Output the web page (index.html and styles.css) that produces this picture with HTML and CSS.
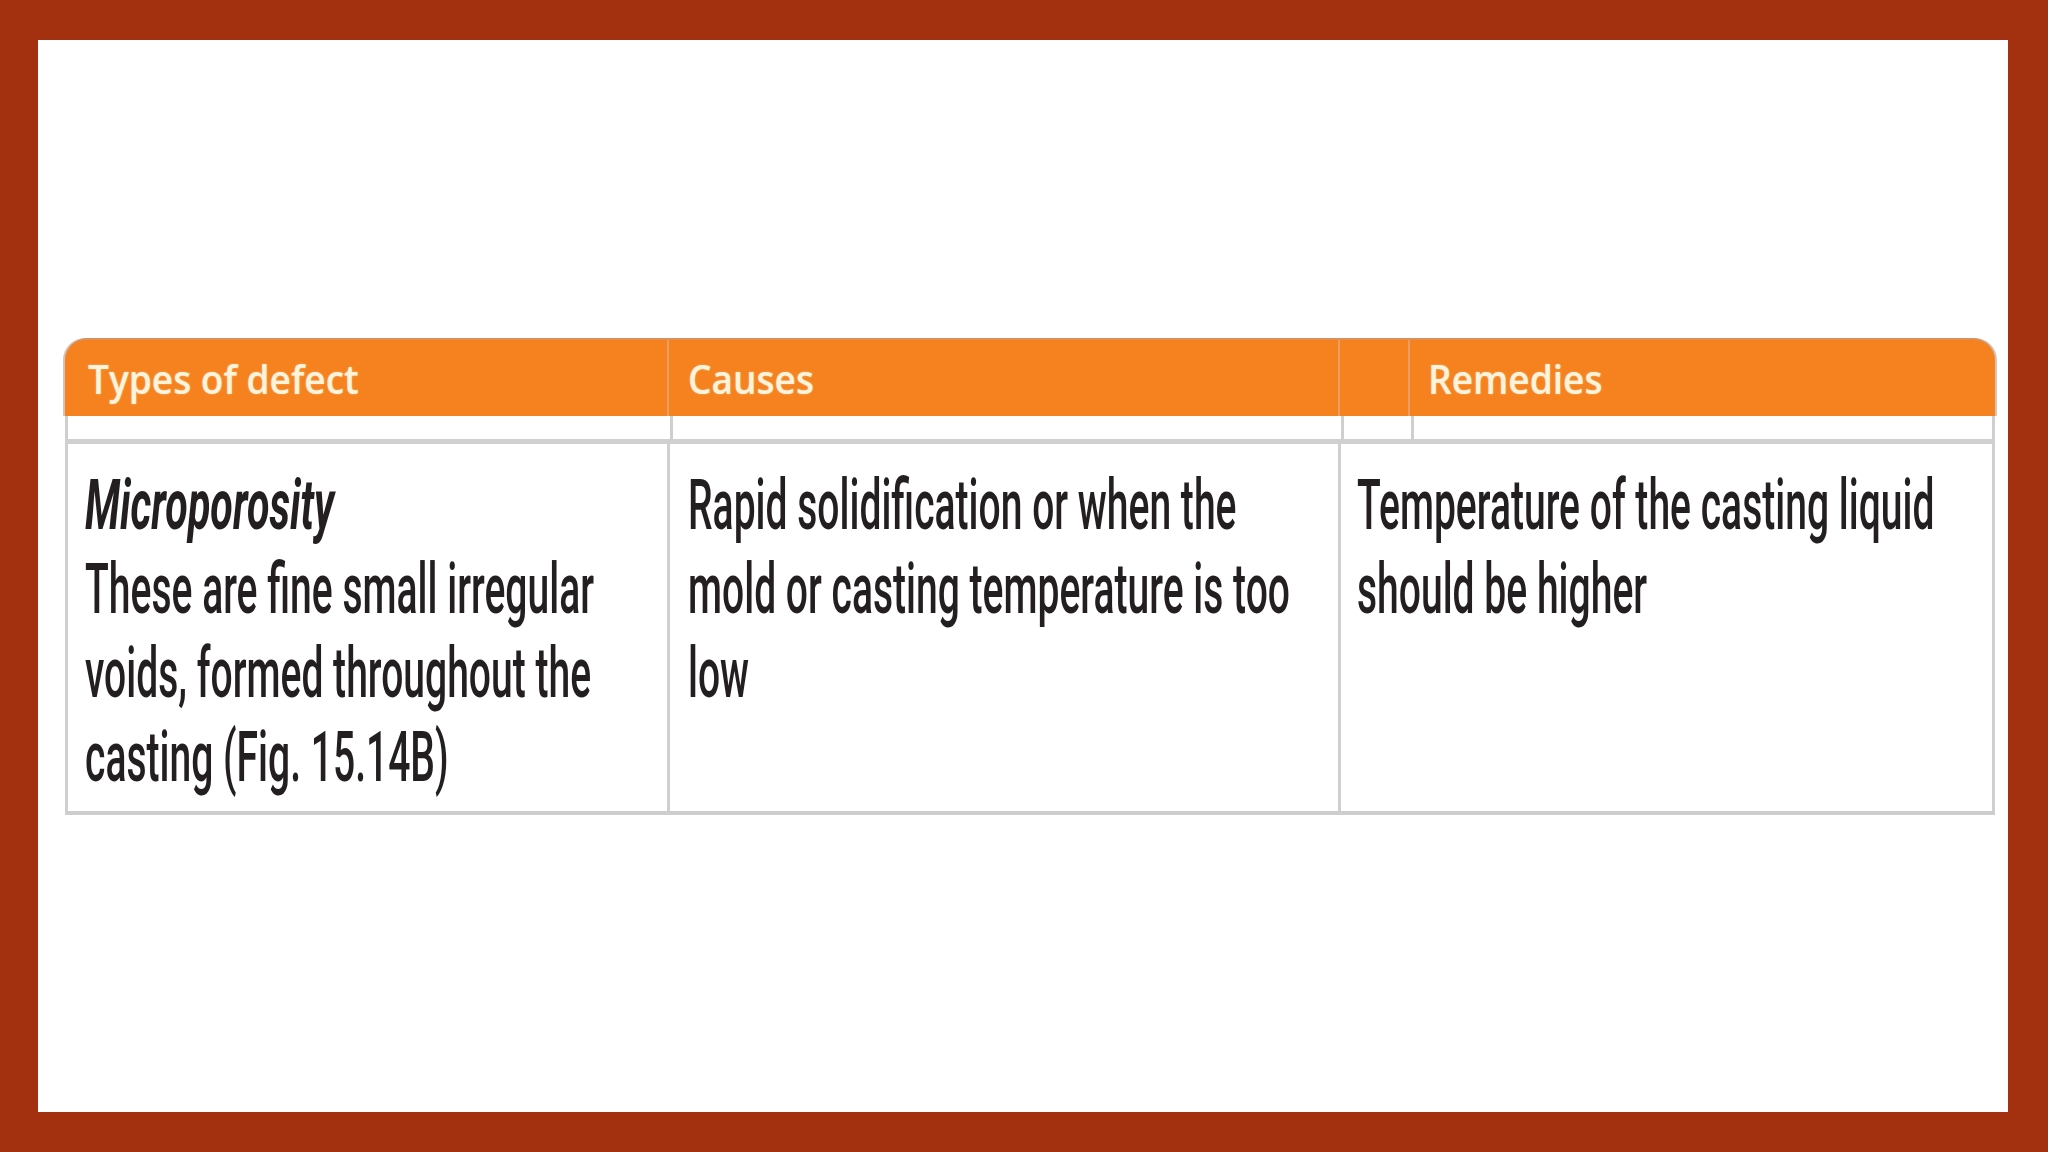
FILE: index.html
```html
<!DOCTYPE html>
<html lang="en">
<head>
<meta charset="utf-8">
<title>Casting defects</title>
<link rel="stylesheet" href="styles.css">
</head>
<body>
<div class="frame">
  <div class="sheet">
    <div class="table">
      <div class="head">
        <div class="hc"><span class="ht">Types of defect</span></div>
        <div class="hc div cau"><span class="ht">Causes</span></div>
        <div class="hc div"></div>
        <div class="hc div rem"><span class="ht">Remedies</span></div>
      </div>
      <div class="strip">
        <div class="sc"></div>
        <div class="sc sdiv"></div>
        <div class="sc sdiv"></div>
        <div class="sc sdiv"></div>
      </div>
      <div class="body">
        <div class="bc c1">
          <span class="ln bi">Microporosity</span>
          <span class="ln">These are fine small irregular</span>
          <span class="ln">voids, formed throughout the</span>
          <span class="ln">casting (Fig. 15.14B)</span>
        </div>
        <div class="bc c2 bdiv">
          <span class="ln">Rapid solidification or when the</span>
          <span class="ln">mold or casting temperature is too</span>
          <span class="ln">low</span>
        </div>
        <div class="bc c3 bdiv">
          <span class="ln">Temperature of the casting liquid</span>
          <span class="ln">should be higher</span>
        </div>
      </div>
    </div>
  </div>
</div>
</body>
</html>
```

FILE: styles.css
```css
html, body {
  margin: 0;
  padding: 0;
}

body {
  width: 2048px;
  height: 1152px;
  overflow: hidden;
  font-family: "Open Sans", "Liberation Sans", sans-serif;
}

.frame {
  box-sizing: border-box;
  width: 2048px;
  height: 1152px;
  background: #a3300f;
  padding: 40px 40px 40px 38px;
}

.sheet {
  box-sizing: border-box;
  height: 100%;
  background: #ffffff;
  padding: 298px 13px 0 27px;
}

.table {
  width: 1930px;
}

.head {
  box-sizing: border-box;
  height: 78px;
  display: grid;
  grid-template-columns: 602px 671px 70px 1fr;
  background: #f5821f;
  border-top: 2px solid #dc8f5c;
  border-radius: 22px 22px 0 0;
  box-shadow: -2px 0 0 #d8c4b4, 2px 0 0 #d8c4b4;
}

.hc {
  padding: 11px 0 0 23px;
  white-space: nowrap;
}

.hc.div {
  border-left: 2px solid #eb9d63;
}

.hc.cau {
  padding-left: 19px;
}

.hc.rem {
  padding-left: 18px;
}

.ht {
  display: inline-block;
  font-size: 39px;
  font-weight: 600;
  line-height: 56px;
  color: #fff3dc;
  transform: scaleX(0.95);
  transform-origin: left center;
  text-shadow: 0 0 2px rgba(255, 230, 190, 0.6);
}

.strip {
  box-sizing: border-box;
  height: 23px;
  display: grid;
  grid-template-columns: 602px 671px 70px 1fr;
  border-left: 3px solid #cfcfcf;
  border-right: 3px solid #cfcfcf;
}

.sc.sdiv {
  border-left: 3px solid #cfcfcf;
}

.body {
  box-sizing: border-box;
  height: 376px;
  display: grid;
  grid-template-columns: 599px 671px 1fr;
  border-top: 5px solid #d0d0d0;
  border-bottom: 4px solid #cdcdcd;
  border-left: 3px solid #cfcfcf;
  border-right: 3px solid #cfcfcf;
}

.bc {
  padding-top: 19px;
  color: #231f20;
  white-space: nowrap;
  min-width: 0;
}

.bc.c1 {
  padding-left: 17px;
}

.bc.c2 {
  padding-left: 18px;
}

.bc.c3 {
  padding-left: 16px;
}

.bc.bdiv {
  border-left: 3px solid #cfcfcf;
}

.ln {
  display: block;
  width: max-content;
  font-family: Roboto, "Liberation Sans", sans-serif;
  font-size: 71px;
  font-weight: 500;
  line-height: 84px;
  transform: scaleX(0.55);
  transform-origin: left center;
}

.ln.bi {
  font-weight: 700;
  font-style: italic;
  transform: scaleX(0.58);
}
```
